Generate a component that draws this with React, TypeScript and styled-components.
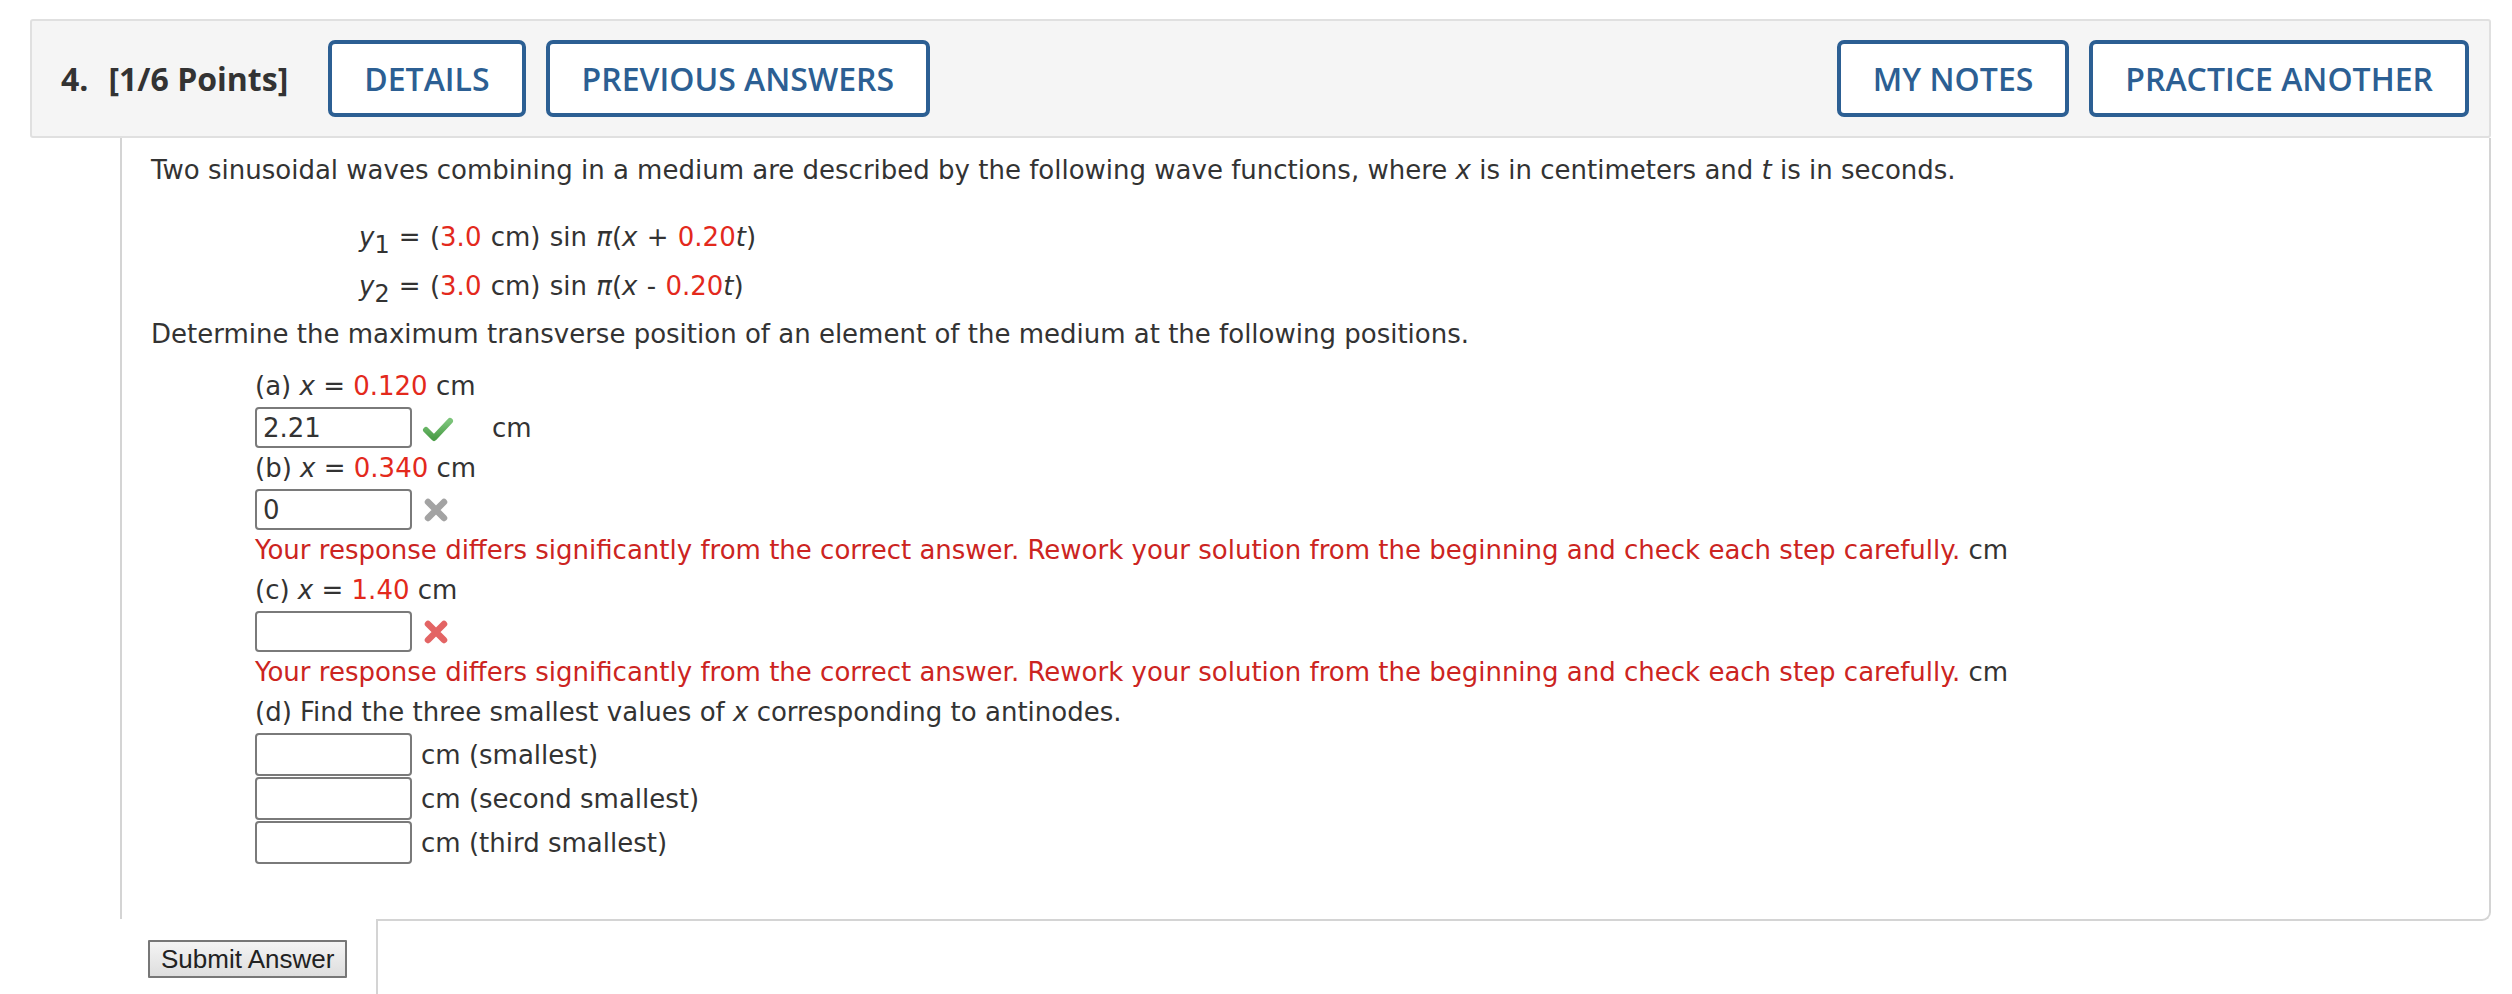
import React from "react";
import styled, { createGlobalStyle } from "styled-components";

const GlobalStyle = createGlobalStyle`
  body {
    margin: 0;
    background: #fff;
    font-family: "DejaVu Sans", Verdana, sans-serif;
    color: #333;
  }
`;

const Page = styled.div`
  padding: 19px 21px 0 30px;
`;

const Header = styled.div`
  height: 115px;
  display: flex;
  align-items: center;
  gap: 20px;
  padding: 0 20px 0 29px;
  background: #f5f5f5;
  border: 2px solid #e0e0e0;
  border-radius: 3px;
`;

const Title = styled.div`
  font-family: "Open Sans", sans-serif;
  font-weight: 700;
  font-size: 32px;
  color: #333;
  margin-right: 20px;
  display: flex;
  gap: 20px;
`;

const HeaderButton = styled.button`
  height: 77px;
  padding: 0 32px;
  background: #fff;
  border: 4px solid #2c5f93;
  border-radius: 7px;
  color: #2c5f93;
  font-family: "Open Sans", sans-serif;
  font-weight: 600;
  font-size: 32px;
  cursor: pointer;
`;

const Spacer = styled.div`
  flex: 1;
`;

const Question = styled.div`
  margin-left: 90px;
`;

const Body = styled.div`
  border-left: 2px solid #d4d4d4;
  border-right: 2px solid #d4d4d4;
  border-bottom: 2px solid #d4d4d4;
  border-bottom-right-radius: 9px;
  padding: 12px 30px 54px 29px;
  font-size: 26px;
`;

const Line = styled.div`
  line-height: 40px;
  white-space: nowrap;
`;

const Equations = styled.div`
  margin: 23px 0 3px 208px;
`;

const EqLine = styled.div`
  line-height: 48px;
  white-space: nowrap;
  word-spacing: 1px;
`;

const Var = styled.i`
  font-style: italic;
`;

const Sub = styled.span`
  font-size: 0.92em;
  position: relative;
  top: 0.28em;
`;

const Val = styled.span`
  color: #e3291c;
`;

const Parts = styled.div`
  margin: 12px 0 0 104px;
`;

const PartLine = styled.div`
  line-height: 41px;
  height: 41px;
  white-space: nowrap;
`;

const Message = styled.div`
  line-height: 40px;
  height: 40px;
  white-space: nowrap;
  color: #cc2421;

  span {
    color: #333;
  }
`;

const AnswerRow = styled.div<{ $tall?: boolean }>`
  display: flex;
  align-items: center;
  height: ${(p) => (p.$tall ? "43px" : "41px")};
  margin-bottom: ${(p) => (p.$tall ? "1px" : "0")};
`;

const Input = styled.input`
  box-sizing: border-box;
  width: 157px;
  height: 100%;
  border: 2px solid #7a7a7a;
  border-radius: 4px;
  padding: 0 6px;
  font-family: "DejaVu Sans", Verdana, sans-serif;
  font-size: 26px;
  color: #333;
  background: #fff;
`;

const Unit = styled.span<{ $gap: number }>`
  margin-left: ${(p) => p.$gap}px;
  white-space: nowrap;
`;

const Mark = styled.svg`
  margin-left: 10px;
  flex: none;
`;

const Footer = styled.div`
  display: flex;
  height: 78px;
`;

const SubmitCell = styled.div`
  width: 256px;
  margin-top: -2px;
  background: #fff;
  padding: 21px 0 0 28px;
  box-sizing: border-box;
`;

const Tail = styled.div`
  flex: 1;
  border-left: 2px solid #d4d4d4;
`;

const SubmitButton = styled.button`
  height: 38px;
  padding: 0 11px;
  font-family: "Liberation Sans", Arial, sans-serif;
  font-size: 26px;
  color: #222;
  border: 2px solid #777;
  border-radius: 1px;
  background: linear-gradient(#f4f4f4, #dedede);
  cursor: pointer;
`;

const Check = () => (
  <Mark width="32" height="28" viewBox="0 0 32 28">
    <defs>
      <linearGradient id="ck" x1="0" y1="0" x2="0" y2="1">
        <stop offset="0" stopColor="#7cc47a" />
        <stop offset="1" stopColor="#4b9e48" />
      </linearGradient>
    </defs>
    <path
      d="M4 16 L12 24 L28 7"
      fill="none"
      stroke="url(#ck)"
      strokeWidth="6"
      strokeLinecap="round"
      strokeLinejoin="round"
    />
  </Mark>
);

const Cross = ({ color }: { color: string }) => (
  <Mark width="28" height="28" viewBox="0 0 28 28">
    <path
      d="M6 6 L22 22 M22 6 L6 22"
      fill="none"
      stroke={color}
      strokeWidth="6.5"
      strokeLinecap="round"
    />
  </Mark>
);

const msg =
  "Your response differs significantly from the correct answer. Rework your solution from the beginning and check each step carefully.";

export default function App() {
  return (
    <>
      <GlobalStyle />
      <Page>
        <Header>
          <Title>
            <span>4.</span>
            <span>[1/6 Points]</span>
          </Title>
          <HeaderButton>DETAILS</HeaderButton>
          <HeaderButton>PREVIOUS ANSWERS</HeaderButton>
          <Spacer />
          <HeaderButton>MY NOTES</HeaderButton>
          <HeaderButton>PRACTICE ANOTHER</HeaderButton>
        </Header>
        <Question>
          <Body>
            <Line>
              Two sinusoidal waves combining in a medium are described by the
              following wave functions, where <Var>x</Var> is in centimeters and{" "}
              <Var>t</Var> is in seconds.
            </Line>
            <Equations>
              <EqLine>
                <Var>y</Var>
                <Sub>1</Sub> = (<Val>3.0</Val> cm) sin <Var>π</Var>(
                <Var>x</Var> + <Val>0.20</Val>
                <Var>t</Var>)
              </EqLine>
              <EqLine>
                <Var>y</Var>
                <Sub>2</Sub> = (<Val>3.0</Val> cm) sin <Var>π</Var>(
                <Var>x</Var> - <Val>0.20</Val>
                <Var>t</Var>)
              </EqLine>
            </Equations>
            <Line>
              Determine the maximum transverse position of an element of the
              medium at the following positions.
            </Line>
            <Parts>
              <PartLine>
                (a) <Var>x</Var> = <Val>0.120</Val> cm
              </PartLine>
              <AnswerRow>
                <Input defaultValue="2.21" />
                <Check />
                <Unit $gap={38}>cm</Unit>
              </AnswerRow>
              <PartLine>
                (b) <Var>x</Var> = <Val>0.340</Val> cm
              </PartLine>
              <AnswerRow>
                <Input defaultValue="0" />
                <Cross color="#a3a3a3" />
              </AnswerRow>
              <Message>
                {msg} <span>cm</span>
              </Message>
              <PartLine>
                (c) <Var>x</Var> = <Val>1.40</Val> cm
              </PartLine>
              <AnswerRow>
                <Input defaultValue="" />
                <Cross color="#e36464" />
              </AnswerRow>
              <Message>
                {msg} <span>cm</span>
              </Message>
              <PartLine>
                (d) Find the three smallest values of <Var>x</Var> corresponding
                to antinodes.
              </PartLine>
              <AnswerRow $tall>
                <Input defaultValue="" />
                <Unit $gap={9}>cm (smallest)</Unit>
              </AnswerRow>
              <AnswerRow $tall>
                <Input defaultValue="" />
                <Unit $gap={9}>cm (second smallest)</Unit>
              </AnswerRow>
              <AnswerRow $tall>
                <Input defaultValue="" />
                <Unit $gap={9}>cm (third smallest)</Unit>
              </AnswerRow>
            </Parts>
          </Body>
          <Footer>
            <SubmitCell>
              <SubmitButton>Submit Answer</SubmitButton>
            </SubmitCell>
            <Tail />
          </Footer>
        </Question>
      </Page>
    </>
  );
}
